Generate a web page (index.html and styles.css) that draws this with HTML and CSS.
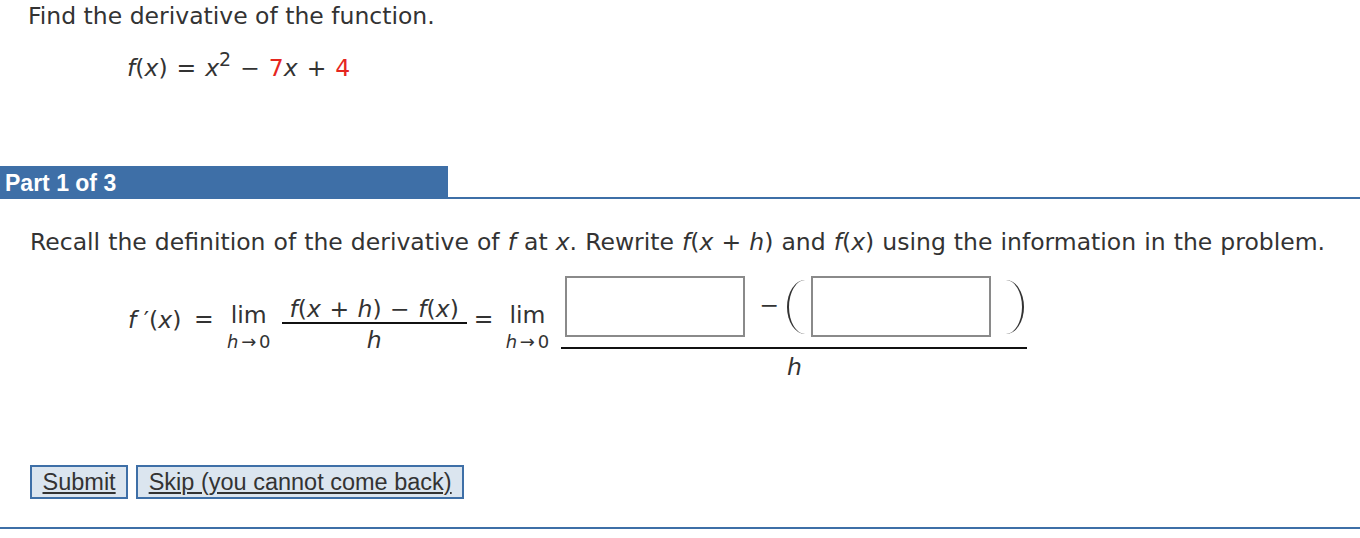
FILE: index.html
```html
<!DOCTYPE html>
<html lang="en">
<head>
    <meta charset="UTF-8">
    <title>Find the derivative</title>
    <link rel="stylesheet" href="styles.css">
</head>
<body>
    <div class="problem">
        <p class="title">Find the derivative of the function.</p>
        <p class="given"><i>f</i>(<i>x</i>) = <i>x</i><sup>2</sup> &minus; <span class="red">7</span><i>x</i> + <span class="red">4</span></p>
    </div>

    <div class="part">
        <div class="part-label">Part 1 of 3</div>
    </div>

    <div class="step">
        <p class="prompt">Recall the definition of the derivative of <i>f</i> at <i>x</i>. Rewrite <i>f</i>(<i>x</i> + <i>h</i>) and <i>f</i>(<i>x</i>) using the information in the problem.</p>

        <div class="eq">
            <span class="lhs"><i>f</i> &prime;(<i>x</i>)</span>
            <span class="eq-sign">=</span>
            <div class="lim">
                <span class="lim-word">lim</span>
                <span class="lim-sub"><i>h</i> &rarr; 0</span>
            </div>
            <div class="frac">
                <span class="num"><i>f</i>(<i>x</i> + <i>h</i>) &minus; <i>f</i>(<i>x</i>)</span>
                <span class="bar"></span>
                <span class="den"><i>h</i></span>
            </div>
            <span class="eq-sign second">=</span>
            <div class="lim second">
                <span class="lim-word">lim</span>
                <span class="lim-sub"><i>h</i> &rarr; 0</span>
            </div>
            <div class="big-frac">
                <div class="big-num">
                    <input class="answer" type="text">
                    <span class="minus">&minus;</span>
                    <span class="paren open"></span>
                    <input class="answer" type="text">
                    <span class="paren close"></span>
                </div>
                <span class="bar"></span>
                <span class="den big-den"><i>h</i></span>
            </div>
        </div>

        <div class="actions">
            <button class="btn">Submit</button>
            <button class="btn">Skip (you cannot come back)</button>
        </div>
    </div>

    <div class="bottom-rule"></div>
</body>
</html>
```

FILE: styles.css
```css
body {
    margin: 0;
    background: #fff;
    color: #333;
    font-family: "DejaVu Sans", Verdana, sans-serif;
    font-size: 23.5px;
    line-height: 28px;
}
p {
    margin: 0;
}
i {
    font-style: italic;
}
.red {
    color: #e5261f;
}

/* problem statement */
.problem {
    padding-left: 28px;
}
.title {
    margin-top: 2px;
}
.given {
    margin-top: 24px;
    padding-left: 99px;
    word-spacing: 1.5px;
}
.given sup {
    font-size: 19px;
    line-height: 0;
    vertical-align: 10px;
}

/* part header */
.part {
    margin-top: 84px;
    border-bottom: 2px solid #3e6fa7;
}
.part-label {
    width: 448px;
    height: 31px;
    box-sizing: border-box;
    padding: 4px 0 0 5px;
    background: #3e6fa7;
    color: #fff;
    font-family: "Liberation Sans", Arial, sans-serif;
    font-weight: bold;
    font-size: 23px;
    line-height: 27px;
}

/* step */
.step {
    padding-left: 30px;
}
.prompt {
    margin-top: 29px;
    word-spacing: 0.6px;
}
.eq {
    display: flex;
    align-items: flex-start;
    margin-top: 20px;
    padding-left: 98px;
    line-height: 24px;
}
.lhs {
    width: 66px;
    margin-top: 32px;
    white-space: nowrap;
}
.eq-sign {
    margin-top: 31px;
}
.eq-sign.second {
    margin-left: 7px;
}
.lim {
    display: flex;
    flex-direction: column;
    align-items: center;
    width: 64px;
    margin-left: 3px;
}
.lim.second {
    margin-left: 2px;
}
.lim-word {
    margin-top: 27px;
}
.lim-sub {
    margin-top: 6px;
    font-size: 18px;
    line-height: 18px;
    white-space: nowrap;
    word-spacing: -3px;
}
.frac {
    display: flex;
    flex-direction: column;
    align-items: center;
    width: 185px;
    margin-left: 1px;
}
.num {
    margin-top: 21px;
    white-space: nowrap;
    word-spacing: 1px;
}
.bar {
    align-self: stretch;
    margin-top: 1px;
    border-top: 2px solid #111;
}
.den {
    margin-top: 4px;
}

/* answer fraction */
.big-frac {
    display: flex;
    flex-direction: column;
    align-items: center;
    width: 466px;
    margin-left: 2px;
}
.big-num {
    display: flex;
    align-items: center;
    align-self: stretch;
    padding-left: 4px;
}
.answer {
    width: 180px;
    height: 61px;
    box-sizing: border-box;
    margin: 0;
    border: 2px solid #8a8a8a;
    background: #fff;
}
.minus {
    margin: -3px 0 0 14px;
}
.paren {
    width: 36px;
    height: 54px;
    box-sizing: border-box;
    border-radius: 50%;
}
.paren.open {
    border-left: 2px solid #333;
    margin: 0 -12px 0 8px;
}
.paren.close {
    border-right: 2px solid #333;
    margin-left: -3px;
}
.big-frac .bar {
    margin-top: 10px;
}
.big-den {
    margin-top: 6px;
}

/* buttons */
.actions {
    display: flex;
    gap: 8px;
    margin-top: 86px;
}
.btn {
    height: 34px;
    margin: 0;
    padding: 0 10.5px;
    border: 2px solid #3e6fa7;
    background: #dbe5ef;
    color: #333;
    font-family: "Liberation Sans", Arial, sans-serif;
    font-size: 23.5px;
    text-decoration: underline;
    cursor: pointer;
}
.bottom-rule {
    margin-top: 28px;
    border-top: 2px solid #3e6fa7;
}
```
